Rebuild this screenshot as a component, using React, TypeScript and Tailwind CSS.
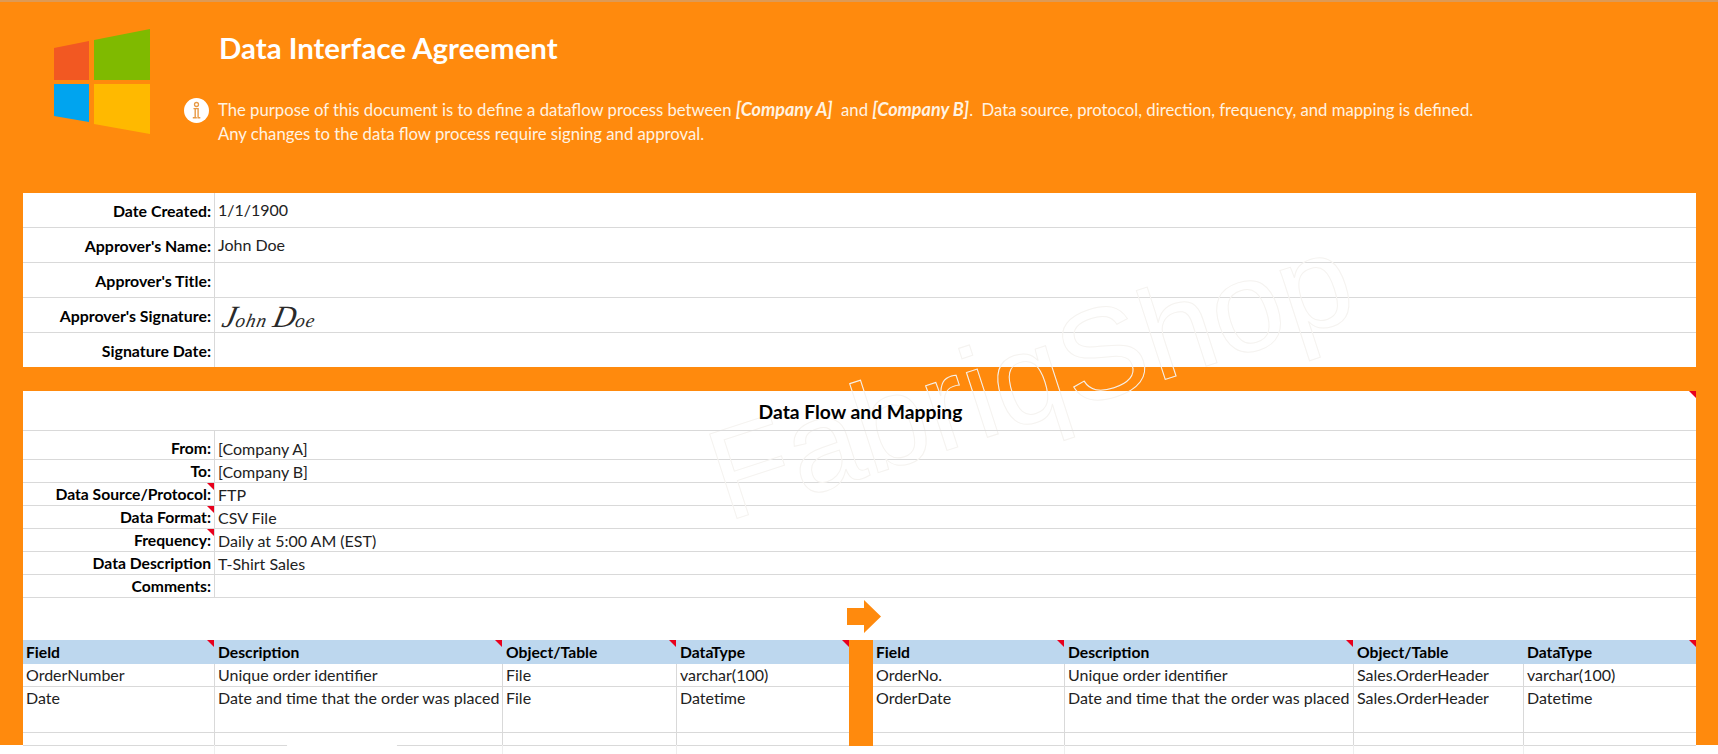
const font = { fontFamily: 'Lato, "Open Sans", sans-serif' };

function Tri() {
  return (
    <span className="absolute top-0 right-0 w-0 h-0 border-t-[7px] border-l-[7px] border-t-[#e8001c] border-l-transparent" />
  );
}

function InfoIcon() {
  return (
    <svg width="25" height="25" viewBox="0 0 25 25" className="shrink-0">
      <circle cx="12.5" cy="12.5" r="12.5" fill="#fff" />
      <circle cx="12.5" cy="6.5" r="2" fill="#fff" stroke="#e89a45" strokeWidth="1.3" />
      <path d="M9.5 10.6h4.6v9.2h2.2M8.8 19.8h4M11.2 11v8.6" fill="none" stroke="#e89a45" strokeWidth="1.4" />
    </svg>
  );
}

function Logo() {
  return (
    <svg width="96" height="105" viewBox="54 29 96 105" className="shrink-0">
      <polygon points="54,48 89,41 89,80 54,80" fill="#f25822" />
      <polygon points="94,40 150,29 150,80 94,80" fill="#7fba00" />
      <polygon points="54,84 89,84 89,122 54,116" fill="#00a4ef" />
      <polygon points="94,84 150,84 150,134 94,124" fill="#ffb900" />
    </svg>
  );
}

function ApprovalRow({ label, value, last, sig }: { label: string; value?: string; last?: boolean; sig?: boolean }) {
  return (
    <div className={`grid grid-cols-[191px_1fr] ${last ? 'h-[34px]' : 'h-[35px] border-b border-[#d9d9d9]'}`}>
      <div className="flex items-center justify-end pr-[3px] pt-[1px] font-bold text-black text-[15.9px]">{label}</div>
      <div className="flex items-center border-l border-[#d9d9d9] pl-[3px] text-[#222] text-[16px]">
        {sig ? (
          <span
            className="inline-block italic leading-none text-[#2a2a2a] ml-[5px] mt-[3px] -skew-x-12 whitespace-pre"
            style={{ fontFamily: '"Liberation Serif", serif' }}
          >
            <span className="text-[31px]">J</span>
            <span className="text-[19px] tracking-[1px]">ohn </span>
            <span className="text-[31px]">D</span>
            <span className="text-[19px] tracking-[1px]">oe</span>
          </span>
        ) : (
          value
        )}
      </div>
    </div>
  );
}

function FlowRow({ label, value, note, tall }: { label: string; value?: string; note?: boolean; tall?: boolean }) {
  return (
    <div className={`grid grid-cols-[191px_1fr] border-b border-[#d9d9d9] ${tall ? 'h-[29px]' : 'h-[23px]'}`}>
      <div className="relative flex items-end justify-end pr-[3px] font-bold text-black text-[15.7px] leading-[21px]">
        {label}
        {note && <Tri />}
      </div>
      <div className="flex items-end border-l border-[#d9d9d9] pl-[3px] text-[#222] text-[16px] leading-[21px]">{value}</div>
    </div>
  );
}

const gridCols = 'grid grid-cols-[191px_288px_174px_173px_24px_191px_289px_170px_173px]';

function HeadCell({ text, note, first }: { text: string; note?: boolean; first?: boolean }) {
  return (
    <div className={`relative bg-[#bdd7ee] font-bold text-black text-[15.7px] leading-[24px] ${first ? 'pl-[3px]' : 'pl-[4px]'}`}>
      {text}
      {note && <Tri />}
    </div>
  );
}

function Cell({ text, first }: { text?: string; first?: boolean }) {
  return (
    <div className={`border-b border-[#d9d9d9] text-[#222] text-[16px] leading-[22px] whitespace-nowrap ${first ? 'pl-[3px]' : 'border-l pl-[3px]'}`}>
      {text}
    </div>
  );
}

const Gutter = () => <div className="bg-[#ff8a0d]" />;

function DataRow({ cells, h }: { cells: string[]; h: string }) {
  return (
    <div className={`${gridCols} ${h}`}>
      <Cell text={cells[0]} first />
      <Cell text={cells[1]} />
      <Cell text={cells[2]} />
      <Cell text={cells[3]} />
      <Gutter />
      <Cell text={cells[4]} first />
      <Cell text={cells[5]} />
      <Cell text={cells[6]} />
      <Cell text={cells[7]} />
    </div>
  );
}

function Tail() {
  const c = 'border-l border-[#eeeeee]';
  return (
    <div className={`${gridCols} h-[9px] ml-[23px]`}>
      <div />
      <div className={c} />
      <div className={c} />
      <div className={c} />
      <div />
      <div />
      <div className={c} />
      <div className={c} />
      <div className={c} />
    </div>
  );
}

export default function App() {
  const desc = 'Date and time that the order was placed';
  return (
    <div className="relative w-[1718px] h-[754px] overflow-hidden bg-white" style={font}>
      <div className="h-[193px] bg-[#ff8a0d] border-t-2 border-[#dd9a55] flex items-start">
        <div className="ml-[54px] mt-[27px]">
          <Logo />
        </div>
        <div className="ml-[34px] flex flex-col">
          <h1 className="ml-[35px] mt-[28px] text-[29.4px] leading-[36px] font-bold text-white">Data Interface Agreement</h1>
          <div className="mt-[32px] flex items-start">
            <InfoIcon />
            <p className="ml-[9px] -mt-[1px] text-[16.7px] leading-[24px] text-[#fff3e2] whitespace-nowrap">
              The purpose of this document is to define a dataflow process between <b className="italic font-bold text-[18px]">[Company A]</b>&nbsp; and <b className="italic font-bold text-[18px]">[Company B]</b>.&nbsp; Data source, protocol, direction, frequency, and mapping is defined.
              <br />
              Any changes to the data flow process require signing and approval.
            </p>
          </div>
        </div>
      </div>

      <div className="h-[552px] bg-[#ff8a0d] pl-[23px] pr-[22px] flex flex-col">
        <div className="bg-white">
          <ApprovalRow label="Date Created:" value="1/1/1900" />
          <ApprovalRow label="Approver's Name:" value="John Doe" />
          <ApprovalRow label="Approver's Title:" />
          <ApprovalRow label="Approver's Signature:" sig />
          <ApprovalRow label="Signature Date:" last />
        </div>

        <div className="mt-[24px] bg-white flex-1">
          <div className="relative z-10 h-[40px] border-b border-[#d9d9d9] flex items-center justify-center font-bold text-black text-[19.3px] pt-[3px] pl-[2px]">
            Data Flow and Mapping
            <Tri />
          </div>
          <FlowRow label="From:" value="[Company A]" tall />
          <FlowRow label="To:" value="[Company B]" />
          <FlowRow label="Data Source/Protocol:" value="FTP" note />
          <FlowRow label="Data Format:" value="CSV File" note />
          <FlowRow label="Frequency:" value="Daily at 5:00 AM (EST)" note />
          <FlowRow label="Data Description" value="T-Shirt Sales" />
          <FlowRow label="Comments:" />

          <div className="h-[42px] flex items-start pl-[824px] pt-[2px]">
            <svg width="34" height="33" viewBox="0 0 34 33">
              <polygon points="0,8 17,8 17,0 34,16.5 17,33 17,25 0,25" fill="#ff8a0d" />
            </svg>
          </div>

          <div className={`${gridCols} h-[24px]`}>
            <HeadCell text="Field" note first />
            <HeadCell text="Description" note />
            <HeadCell text="Object/Table" note />
            <HeadCell text="DataType" note />
            <Gutter />
            <HeadCell text="Field" note first />
            <HeadCell text="Description" note />
            <HeadCell text="Object/Table" />
            <HeadCell text="DataType" note />
          </div>
          <DataRow h="h-[23px]" cells={['OrderNumber', 'Unique order identifier', 'File', 'varchar(100)', 'OrderNo.', 'Unique order identifier', 'Sales.OrderHeader', 'varchar(100)']} />
          <DataRow h="h-[46px]" cells={['Date', desc, 'File', 'Datetime', 'OrderDate', desc, 'Sales.OrderHeader', 'Datetime']} />
          <DataRow h="h-[13px]" cells={['', '', '', '', '', '', '', '']} />
        </div>
      </div>
      <Tail />

      <div className="absolute left-[287px] top-[744px] w-[110px] h-[3px] bg-white rounded-full" />

      <div
        aria-hidden="true"
        className="absolute left-[697px] top-[312px] text-[129px] leading-none text-transparent whitespace-nowrap pointer-events-none -rotate-[18deg] origin-center [-webkit-text-stroke:1px_#f5f3f0]"
        style={{ fontFamily: '"Liberation Sans", sans-serif' }}
      >
        FabriqShop
      </div>
    </div>
  );
}
